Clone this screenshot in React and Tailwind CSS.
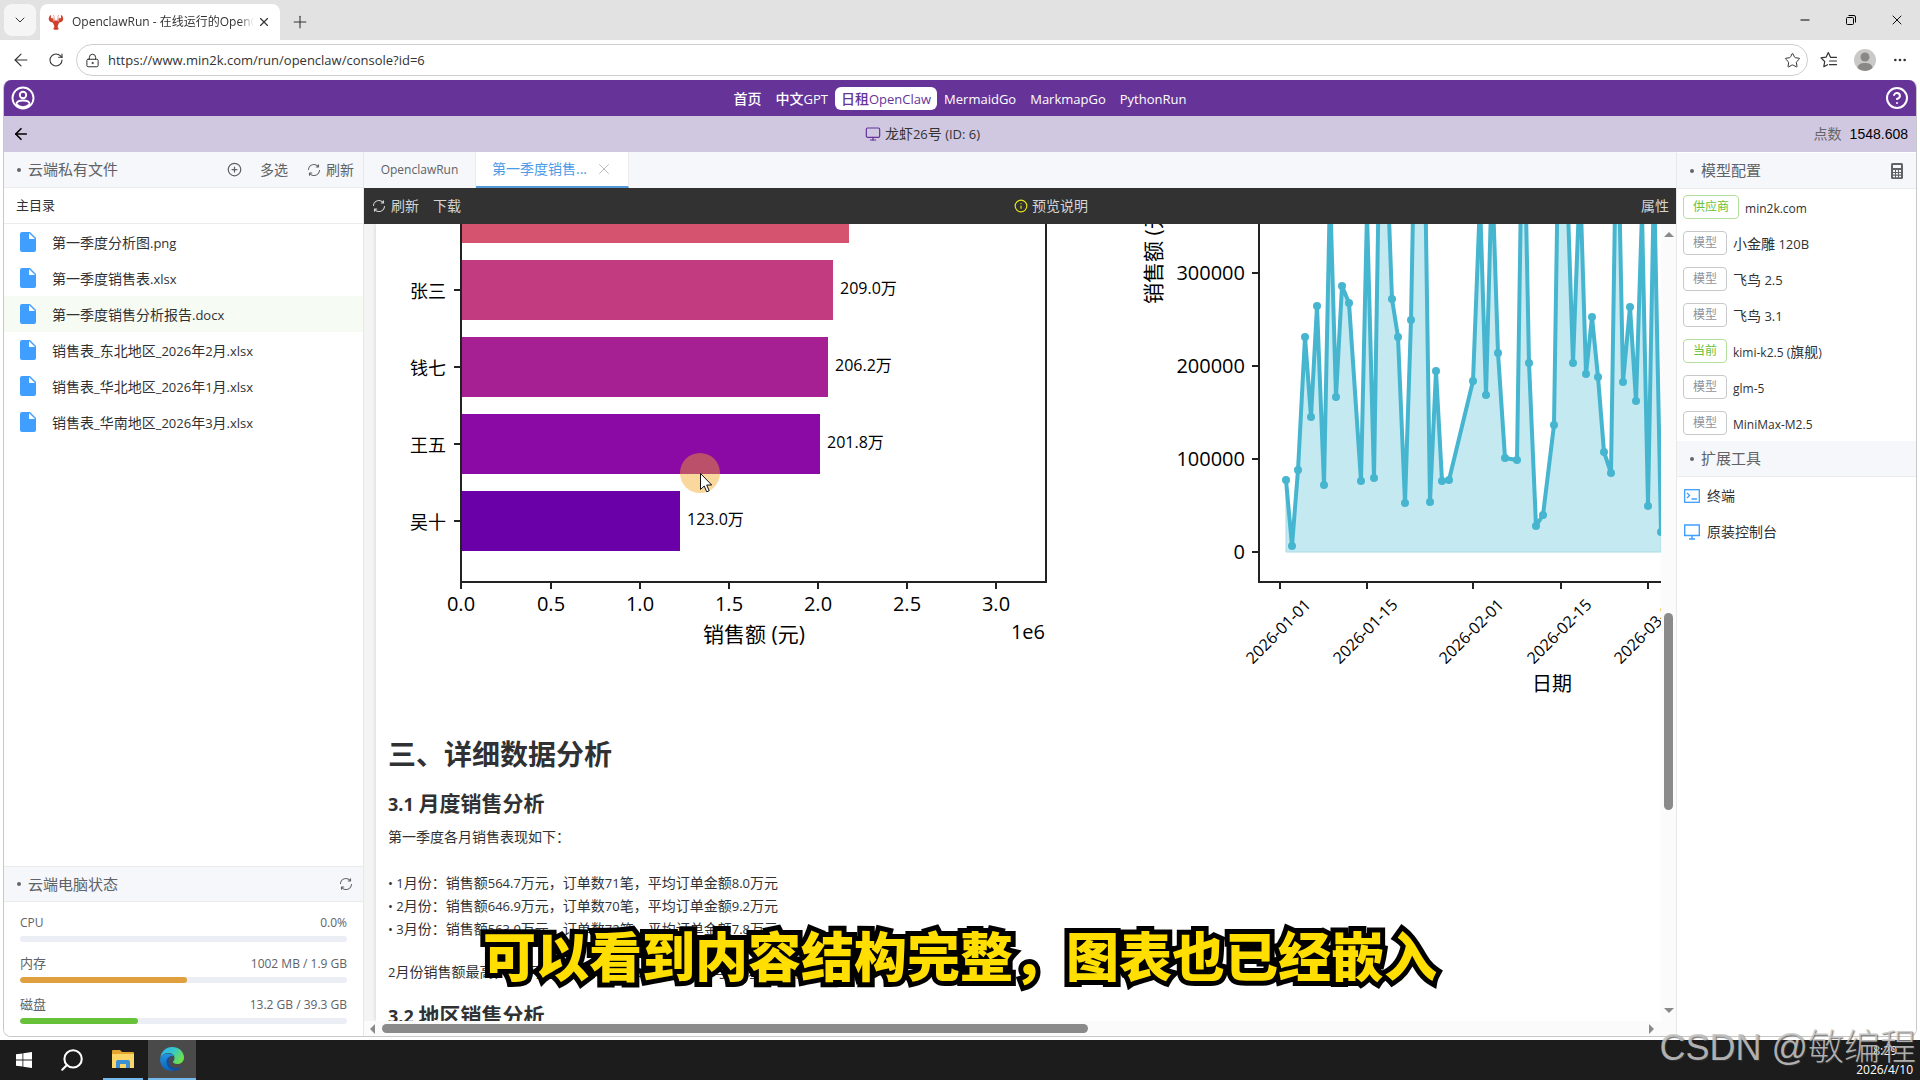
import React from "react";
import {
  ArrowLeft, ChevronDown, X, Plus, Minus, RotateCw, Star, Ellipsis,
  CirclePlus, CircleAlert, CircleHelp, Monitor, LockKeyhole, Search,
} from "lucide-react";

/* Mixed-script text: Latin runs are set slightly smaller than the CJK around them. */
function Mixed({ children, latin = "text-[13px] leading-none" }) {
  return children.split(/([\x20-\x7e•]+)/).map((part, i) =>
    i % 2 ? <span key={i} className={latin}>{part}</span> : part
  );
}

function RefreshIcon({ className }) {
  return (
    <svg viewBox="0 0 1024 1024" className={className} fill="currentColor" aria-hidden="true">
      <path transform="matrix(-1 0 0 1 1024 0)" d="M771.776 794.88A384 384 0 0 1 128 512h64a320 320 0 0 0 555.712 216.448H654.72a32 32 0 1 1 0-64h149.056a32 32 0 0 1 32 32v148.928a32 32 0 1 1-64 0v-50.56zM276.288 295.616h92.992a32 32 0 0 1 0 64H220.16a32 32 0 0 1-32-32V178.56a32 32 0 0 1 64 0v50.56A384 384 0 0 1 896.128 512h-64a320 320 0 0 0-555.776-216.384z" />
    </svg>
  );
}

function LobsterIcon() {
  return (
    <svg viewBox="0 0 16 16" className="size-4 shrink-0" fill="#d0402b" aria-hidden="true">
      <path d="M3.2.8C1.200 2 .2 4.400 1 6.200c.6 1.300 2 2 3.200 2.100L6 10l1.200-1.300-1.800-1.700c.5-1.400.1-2.900-.9-3.500L4.200 5 2.900 3.400zM12.800.8c2 1.200 3 3.600 2.200 5.400-.6 1.300-2 2-3.200 2.100L10 10 8.800 8.700l1.800-1.700c-.5-1.400-.1-2.900.9-3.500L11.800 5l1.300-1.600z" />
      <path d="M6 6.500h4l.6 3-1 3.200 1.200 2.300-1.400.8H6.600L5.200 15l1.200-2.300-1-3.200z" />
      <path d="M6.800 6.500 5.500.8M9.200 6.500 10.500.8" stroke="#e0705c" strokeWidth=".6" />
    </svg>
  );
}

function FileIcon() {
  return (
    <svg viewBox="0 0 16 20" className="h-5 w-4 shrink-0" aria-hidden="true">
      <path d="M2 0h8l6 6v12a2 2 0 0 1-2 2H2a2 2 0 0 1-2-2V2a2 2 0 0 1 2-2z" fill="#409eff" />
      <path d="M9 1l6 6H9z" fill="#fff" />
    </svg>
  );
}

function BrowserChrome() {
  return (
    <header className="shrink-0 bg-white text-[#333]">
      <div className="flex h-10 items-end bg-[#e2e2e2] pl-1">
        <button aria-label="标签页列表" className="mb-1 flex size-8 items-center justify-center rounded-lg bg-[#f5f5f5]">
          <ChevronDown className="size-4" strokeWidth={1.5} />
        </button>
        <div className="ml-1 flex h-9 w-60 items-center rounded-t-lg bg-white pr-2 pl-2 text-xs">
          <LobsterIcon />
          <span className="ml-2 w-[182px] overflow-hidden whitespace-nowrap [mask-image:linear-gradient(to_right,black_92%,transparent)]">
            OpenclawRun - 在线运行的OpenClaw
          </span>
          <button aria-label="关闭标签页" className="ml-0.5 flex size-4 items-center justify-center">
            <X className="size-[14px]" strokeWidth={2} />
          </button>
        </div>
        <button aria-label="新建标签页" className="mb-2 ml-2.5 flex size-5 items-center justify-center">
          <Plus className="size-5" strokeWidth={1.3} />
        </button>
        <div className="mb-2 ml-auto flex gap-[22px] pr-[11px] text-black">
          <button aria-label="最小化" className="flex size-6 items-center justify-center"><Minus className="size-3.5" strokeWidth={1.7} /></button>
          <button aria-label="还原" className="flex size-6 items-center justify-center">
            <svg viewBox="0 0 10 10" className="size-2.5" fill="none" stroke="currentColor">
              <rect x=".5" y="2.500" width="7" height="7" rx="1" />
              <path d="M2.500.5H8a1.500 1.500 0 0 1 1.500 1.500v5.500" />
            </svg>
          </button>
          <button aria-label="关闭" className="flex size-6 items-center justify-center"><X className="size-4" strokeWidth={1.4} /></button>
        </div>
      </div>
      <div className="flex h-10 items-center pl-[11px]">
        <button aria-label="后退"><ArrowLeft className="size-5" strokeWidth={1.4} /></button>
        <button aria-label="刷新页面" className="ml-[17px]"><RotateCw className="size-4" strokeWidth={1.6} /></button>
        <div className="ml-3 flex h-8 flex-1 items-center rounded-full border border-[#cfcfcf] bg-white pr-1.5 pl-2">
          <LockKeyhole className="size-[15px]" strokeWidth={1.6} />
          <input aria-label="地址" defaultValue="https://www.min2k.com/run/openclaw/console?id=6" className="ml-2 flex-1 bg-transparent pt-0.5 text-[13px] outline-none" />
          <button aria-label="收藏"><Star className="size-[17px]" strokeWidth={1.4} /></button>
        </div>
        <button aria-label="收藏夹" className="ml-3">
          <svg viewBox="0 0 18 18" className="size-[18px]" fill="none" stroke="currentColor" strokeWidth="1.2" strokeLinejoin="round" strokeLinecap="round">
            <path d="M10.500 6.200 8.300 1.500 6.100 6.200 1 6.900l3.700 3.600-.9 5.200L7.500 13.700M10.500 6.300H16.500M9.500 10h7M9.500 13.700h7" />
          </svg>
        </button>
        <button aria-label="个人资料" className="ml-4">
          <svg viewBox="0 0 22 22" className="size-[22px]">
            <circle cx="11" cy="11" r="11" fill="#cbc9c7" />
            <circle cx="11" cy="8" r="4.500" fill="#8a8886" />
            <path d="M3.500 19c.5-4 3.500-5 7.500-5s7 1 7.500 5A11 11 0 0 1 3.500 19z" fill="#8a8886" />
          </svg>
        </button>
        <button aria-label="设置及其他" className="mr-3 ml-4"><Ellipsis className="size-4" strokeWidth={2} /></button>
      </div>
    </header>
  );
}

const NAV = ["首页", "中文GPT", "日租OpenClaw", "MermaidGo", "MarkmapGo", "PythonRun"];

function AppHeader() {
  return (
    <>
      <div className="flex h-9 shrink-0 items-center bg-[#663399] px-[7px] text-white">
        <button aria-label="账户">
          <svg viewBox="0 0 24 24" className="size-6" fill="none" stroke="currentColor" strokeWidth="1.900">
            <circle cx="12" cy="12" r="10.500" />
            <circle cx="12" cy="9" r="3.200" />
            <path d="M5.500 18.500c-.5-3 2.500-4 6.500-4s7 1 6.500 4c-2 2-4 2.700-6.500 2.700s-4.500-.7-6.500-2.700z" />
          </svg>
        </button>
        <nav className="flex flex-1 items-center justify-center">
          {NAV.map((n) => (
            <a key={n} href="#" className={n === "日租OpenClaw"
              ? "rounded-md bg-white px-1.5 text-sm leading-[23px] font-medium text-[#663399]"
              : "px-[7px] text-sm leading-[23px] font-medium"}>
              <Mixed>{n}</Mixed>
            </a>
          ))}
        </nav>
        <button aria-label="帮助"><CircleHelp className="size-6" strokeWidth={2} /></button>
      </div>
      <div className="grid h-9 shrink-0 grid-cols-[1fr_auto_1fr] items-center bg-[#d0c7e1] px-2">
        <button aria-label="返回" className="justify-self-start text-black"><ArrowLeft className="size-[18px]" strokeWidth={2.2} /></button>
        <div className="flex items-center gap-1 pr-[75px] text-sm text-[#333]">
          <Monitor className="size-4 text-[#663399]" strokeWidth={1.8} />
          <span><Mixed>龙虾26号 (ID: 6)</Mixed></span>
        </div>
        <div className="flex items-center gap-2 justify-self-end text-sm text-[#666]">
          点数 <span className="font-['Liberation_Sans',sans-serif] text-black">1548.608</span>
        </div>
      </div>
    </>
  );
}

function PanelHeader({ title, children, className }) {
  return (
    <div className={`flex h-9 shrink-0 items-center border-[#ebebeb] bg-[#f5f7fa] pl-[13px] text-[#606266] ${className}`}>
      <span className="mr-[7px] size-1 rounded-full bg-[#666]" />
      <h2 className="flex-1 text-[15px]">{title}</h2>
      {children}
    </div>
  );
}

const FILES = [
  "第一季度分析图.png",
  "第一季度销售表.xlsx",
  "第一季度销售分析报告.docx",
  "销售表_东北地区_2026年2月.xlsx",
  "销售表_华北地区_2026年1月.xlsx",
  "销售表_华南地区_2026年3月.xlsx",
];

const METERS = [
  { label: "CPU", value: "0.0%", pct: 0, color: "bg-[#67c23a]" },
  { label: "内存", value: "1002 MB / 1.9 GB", pct: 51, color: "bg-[#e0a040]" },
  { label: "磁盘", value: "13.2 GB / 39.3 GB", pct: 36, color: "bg-[#67c23a]" },
];

function FilePanel() {
  return (
    <aside className="flex w-[360px] shrink-0 flex-col border-r border-[#e8e8e8] bg-white">
      <PanelHeader title="云端私有文件" className="border-b">
        <div className="flex items-center pr-[9px] text-sm">
          <button aria-label="新建"><CirclePlus className="size-[15px]" strokeWidth={2} /></button>
          <button className="ml-[18px]">多选</button>
          <button className="ml-[18px] flex items-center gap-1"><RefreshIcon className="size-4" />刷新</button>
        </div>
      </PanelHeader>
      <div className="flex h-9 shrink-0 items-center border-b border-[#ebebeb] pl-3 text-[13px] text-[#303133]">主目录</div>
      <ul className="min-h-0 flex-1 overflow-hidden">
        {FILES.map((f, i) => (
          <li key={f} className={i === 2 ? "bg-[#f6fbf3]" : ""}>
            <a href="#" className="flex h-9 items-center gap-4 pl-4 text-sm text-[#303133]">
              <FileIcon />
              <span className="pt-0.5"><Mixed>{f}</Mixed></span>
            </a>
          </li>
        ))}
      </ul>
      <PanelHeader title="云端电脑状态" className="border-y">
        <button aria-label="刷新状态" className="mr-[9px]"><RefreshIcon className="size-4" /></button>
      </PanelHeader>
      <div className="flex flex-col gap-[11px] px-4 pt-[10px] pb-3 text-[#606266]">
        {METERS.map((m) => (
          <div key={m.label}>
            <div className="flex h-6 items-center justify-between pb-0.5">
              <span className={m.label === "CPU" ? "text-xs" : "text-[13px]"}>{m.label}</span>
              <span className="text-xs">{m.value}</span>
            </div>
            <div role="progressbar" aria-label={m.label} aria-valuenow={m.pct} className="h-1.5 overflow-hidden rounded-full bg-[#ebeef5]">
              <div className={`h-full rounded-full ${m.color}`} style={{ width: `${m.pct}%` }} />
            </div>
          </div>
        ))}
      </div>
    </aside>
  );
}

/* Bars of the sales-by-person chart. */
const BARS = [
  { y: 183, w: 388, fill: "#d5536f" },
  { y: 260, w: 372, fill: "#c23b80", name: "张三", value: "209.0万" },
  { y: 337, w: 367, fill: "#a72093", name: "钱七", value: "206.2万" },
  { y: 414, w: 359, fill: "#8b0aa5", name: "王五", value: "201.8万" },
  { y: 491, w: 219, fill: "#6a00a7", name: "吴十", value: "123.0万" },
];

/* Daily sales points of the trend chart. */
const POINTS = [
  [1286, 480], [1292, 546], [1298, 470], [1305, 337], [1311, 417], [1317, 306], [1324, 485], [1330, 190],
  [1336, 397], [1342, 286], [1349, 303], [1361, 481], [1367, 212], [1374, 478], [1380, 108], [1386, 137],
  [1392, 299], [1398, 337], [1405, 503], [1411, 320], [1417, 0], [1424, 98], [1430, 502], [1436, 371],
  [1442, 481], [1449, 480], [1473, 381], [1480, 200], [1486, 395], [1492, 170], [1498, 353], [1505, 458],
  [1517, 460], [1523, 60], [1529, 363], [1536, 526], [1543, 515], [1554, 425], [1561, -35], [1567, 180],
  [1573, 363], [1580, 178], [1586, 374], [1592, 317], [1598, 377], [1604, 452], [1611, 473], [1617, 75],
  [1623, 382], [1630, 307], [1636, 401], [1642, 212], [1648, 506], [1654, 178], [1661, 532],
];
const LINE = POINTS.map((p) => p.join(",")).join(" ");

function Charts() {
  return (
    <svg width="1400" height="487" viewBox="376 224 1400 487" className="block max-w-none bg-white font-['Open_Sans','Noto_Sans_CJK_SC',sans-serif]" fill="#000">
      {BARS.map((b) => <rect key={b.y} x="461" y={b.y} width={b.w} height="60" fill={b.fill} />)}
      {BARS.filter((b) => b.name).map((b) => (
        <g key={b.name}>
          <path d={`M454 ${b.y + 30}h7`} stroke="#222" strokeWidth="2" />
          <text x="446" y={b.y + 38} textAnchor="end" fontSize="18">{b.name}</text>
          <text x={467 + b.w + 1} y={b.y + 34} fontSize="16">{b.value}</text>
        </g>
      ))}
      <path d="M461 200V582H1046V200" fill="none" stroke="#222" strokeWidth="2" />
      {[[461, "0.0"], [551, "0.5"], [640, "1.0"], [729, "1.5"], [818, "2.0"], [907, "2.5"], [996, "3.0"]].map(([x, t]) => (
        <g key={t}>
          <path d={`M${x} 582v7`} stroke="#222" strokeWidth="2" />
          <text x={x} y="611" textAnchor="middle" fontSize="20">{t}</text>
        </g>
      ))}
      <text x="754" y="642" textAnchor="middle" fontSize="21">销售额 (元)</text>
      <text x="1045" y="639" textAnchor="end" fontSize="20">1e6</text>

      <polygon points={`1286,552 ${LINE} 1661,552`} fill="#c5e9f0" stroke="#a9dbe6" />
      <polyline points={LINE} fill="none" stroke="#46b5cf" strokeWidth="4" strokeLinejoin="round" />
      {POINTS.map(([x, y]) => <circle key={x} cx={x} cy={y} r="4" fill="#46b5cf" />)}
      <path d="M1259 200V582H1760" fill="none" stroke="#222" strokeWidth="2" />
      {["0", "100000", "200000", "300000"].map((t, i) => (
        <g key={t}>
          <path d={`M1252 ${552 - i * 93}h7`} stroke="#222" strokeWidth="2" />
          <text x="1245" y={559 - i * 93} textAnchor="end" fontSize="20">{t}</text>
        </g>
      ))}
      {[[1280, "2026-01-01"], [1367, "2026-01-15"], [1473, "2026-02-01"], [1561, "2026-02-15"], [1648, "2026-03-01"]].map(([x, t]) => (
        <g key={t}>
          <path d={`M${x} 582v7`} stroke="#222" strokeWidth="2" />
          <text transform={`translate(${x - 2} 631) rotate(-45)`} y="6" textAnchor="middle" fontSize="16">{t}</text>
        </g>
      ))}
      <text transform="translate(1161 304) rotate(-90)" fontSize="21">销售额 (元)</text>
      <text x="1552" y="691" textAnchor="middle" fontSize="20">日期</text>
    </svg>
  );
}

function Report() {
  return (
    <article className="mx-3 flex-1 bg-white text-[#303133] shadow-[0_0_4px_rgba(0,0,0,0.15)]">
      <Charts />
      <div className="px-3 text-sm whitespace-nowrap">
        <h1 className="mt-[25px] text-[28px] leading-9 font-bold">三、详细数据分析</h1>
        <h2 className="mt-[17px] text-[21px] leading-7 font-bold"><Mixed latin="text-lg leading-none">3.1 月度销售分析</Mixed></h2>
        <p className="mt-[9px] leading-[22px]">第一季度各月销售表现如下：</p>
        <ul className="mt-[23px] leading-[23px]">
          <li><Mixed>• 1月份：销售额564.7万元，订单数71笔，平均订单金额8.0万元</Mixed></li>
          <li><Mixed>• 2月份：销售额646.9万元，订单数70笔，平均订单金额9.2万元</Mixed></li>
          <li><Mixed>• 3月份：销售额563.0万元，订单数72笔，平均订单金额7.8万元</Mixed></li>
        </ul>
        <p className="mt-[21px] leading-[22px]"><Mixed>2月份销售额最高，较1月份增长14.6%，3月份销售额与1月基本持平。</Mixed></p>
        <h2 className="mt-[18px] text-[21px] leading-7 font-bold"><Mixed latin="text-lg leading-none">3.2 地区销售分析</Mixed></h2>
      </div>
    </article>
  );
}

function Viewer() {
  return (
    <main className="flex min-w-0 flex-1 flex-col">
      <div role="tablist" className="flex h-9 shrink-0 bg-[#f5f7fa] text-sm">
        <button role="tab" className="w-28 border-r border-[#ebebeb] text-xs text-[#606266]">OpenclawRun</button>
        <div role="tab" aria-selected="true" className="flex w-[153px] items-center border-r border-b-2 border-r-[#ebebeb] border-b-[#5599d8] bg-white pl-4 text-[#4a9be8]">
          第一季度销售...
          <button aria-label="关闭" className="ml-2 text-[#bbb]"><X className="size-[18px]" strokeWidth={1.3} /></button>
        </div>
      </div>
      <div className="grid h-9 shrink-0 grid-cols-3 items-center bg-[#323232] px-[7px] text-sm text-[#d5d5d5]">
        <div className="flex items-center gap-3.5">
          <button className="flex items-center gap-1"><RefreshIcon className="size-4" />刷新</button>
          <button>下载</button>
        </div>
        <button className="flex items-center justify-center gap-1 pl-[62px]"><CircleAlert className="size-[14px] rotate-180 text-[#e6e619]" strokeWidth={2} />预览说明</button>
        <button className="justify-self-end">属性</button>
      </div>
      <div className="grid min-h-0 flex-1 grid-cols-[minmax(0,1fr)_15px] grid-rows-[minmax(0,1fr)_15px] bg-[#fbfbfb]">
        <div className="flex overflow-hidden bg-[#f4f4f4]"><Report /></div>
        <div className="flex min-h-0 flex-col items-center py-2">
          <span className="border-x-[5px] border-b-[5px] border-x-transparent border-b-[#8a8a8a]" />
          <span className="h-[376px]" />
          <span className="h-[197px] w-[9px] rounded-full bg-[#8a8a8a]" />
          <span className="mt-auto border-x-[5px] border-t-[5px] border-x-transparent border-t-[#8a8a8a]" />
        </div>
        <div className="flex items-center pr-[7px] pl-1.5">
          <span className="border-y-[5px] border-r-[5px] border-y-transparent border-r-[#8a8a8a]" />
          <span className="ml-[7px] h-[9px] w-[55%] rounded-full bg-[#8a8a8a]" />
          <span className="ml-auto border-y-[5px] border-l-[5px] border-y-transparent border-l-[#8a8a8a]" />
        </div>
      </div>
    </main>
  );
}

const MODELS = [
  ["供应商", "min2k.com"],
  ["模型", "小金雕 120B"],
  ["模型", "飞鸟 2.5"],
  ["模型", "飞鸟 3.1"],
  ["当前", "kimi-k2.5 (旗舰)"],
  ["模型", "glm-5"],
  ["模型", "MiniMax-M2.5"],
];

function ConfigPanel() {
  return (
    <aside className="flex w-60 shrink-0 flex-col border-l border-[#e8e8e8] bg-white pt-px">
      <PanelHeader title="模型配置" className="border-b">
        <button aria-label="计算器" className="mr-[13px]">
          <svg viewBox="0 0 12 16" className="h-4 w-3">
            <rect width="12" height="16" rx="1.500" fill="#606266" />
            <path d="M2 2h8v3H2zM2 7h2v2H2zM5 7h2v2H5zM8 7h2v2H8zM2 10h2v1.500H2zM5 10h2v1.500H5zM8 10h2v1.500H8zM2 12.700h2v1.500H2zM5 12.700h2v1.500H5zM8 12.700h2v1.500H8z" fill="#f5f7fa" />
          </svg>
        </button>
      </PanelHeader>
      <ul>
        {MODELS.map(([tag, name]) => (
          <li key={name} className="flex h-9 items-center gap-1.5 pl-1.5 text-sm text-[#303133]">
            <span className={tag === "模型"
              ? "rounded border border-[#c8c9cc] px-[9px] text-xs leading-[22px] text-[#909399]"
              : "rounded border border-[#b3e19d] px-[9px] text-xs leading-[22px] text-[#67c23a]"}>{tag}</span>
            <span className="pt-0.5"><Mixed latin={/[a-z]/.test(name) ? "text-xs leading-none" : "text-[13px] leading-none"}>{name}</Mixed></span>
          </li>
        ))}
      </ul>
      <PanelHeader title="扩展工具" className="border-b" />
      <a href="#" className="flex h-9 items-center gap-[7px] pt-0.5 pl-[7px] text-sm text-[#303133]">
        <svg viewBox="0 0 16 14" className="h-[14px] w-4" fill="none" stroke="#409eff" strokeWidth="1.3">
          <rect x=".7" y=".7" width="14.600" height="12.600" />
          <path d="M3 4l2.500 2.500L3 9M7.500 10h5.500" />
        </svg>
        终端
      </a>
      <a href="#" className="flex h-9 items-center gap-[7px] pt-0.5 pl-[7px] text-sm text-[#303133]">
        <svg viewBox="0 0 16 16" className="size-4" fill="none" stroke="#409eff" strokeWidth="1.4">
          <path d="M.7 1h14.600v10.500H.7zM8 11.500V15M5 15h6" />
        </svg>
        原装控制台
      </a>
    </aside>
  );
}

function Taskbar() {
  return (
    <footer className="flex h-10 shrink-0 items-stretch bg-[#1c1c1c] text-white">
      <button aria-label="开始" className="flex w-12 items-center justify-center">
        <svg viewBox="0 0 16 16" className="size-4" fill="#fff">
          <path d="M0 2.300 6.500 1.400v6.200H0zM7.300 1.300 16 0v7.600H7.300zM0 8.400h6.500v6.200L0 13.700zM7.300 8.400H16V16l-8.700-1.300z" />
        </svg>
      </button>
      <button aria-label="搜索" className="flex w-12 items-center justify-center"><Search className="size-[26px] -scale-x-100" strokeWidth={1.9} /></button>
      <button aria-label="文件资源管理器" className="mx-[7px] flex w-10 items-center justify-center border-b-2 border-[#76b9ed]">
        <svg viewBox="0 0 22 18" className="h-[18px] w-[22px]">
          <path d="M0 1a1 1 0 0 1 1-1h7l2 2h11a1 1 0 0 1 1 1v14H0z" fill="#e3a52e" />
          <path d="M0 4h22v14H0z" fill="#fbd568" />
          <path d="M4 18v-6a2 2 0 0 1 2-2h10a2 2 0 0 1 2 2v6h-4v-4H8v4z" fill="#3d90d3" />
        </svg>
      </button>
      <button aria-label="浏览器" className="-ml-0.5 flex w-12 items-center justify-center border-b-2 border-[#76b9ed] bg-[#4a4a4a]">
        <svg viewBox="0 0 24 24" className="size-6">
          <defs>
            <linearGradient id="edge-top" x1="0" y1="0" x2="1" y2=".5">
              <stop offset="0" stopColor="#2fb2e8" />
              <stop offset=".5" stopColor="#34c5cf" />
              <stop offset="1" stopColor="#6be04f" />
            </linearGradient>
            <linearGradient id="edge-low" x1="0" y1="0" x2="0" y2="1">
              <stop offset="0" stopColor="#2395e0" />
              <stop offset="1" stopColor="#0d63b8" />
            </linearGradient>
          </defs>
          <path d="M.3 11C1 4.500 6 0 12 0c7 0 12 4.800 12 10.500 0 4-3 6.500-6.500 6.500-3 0-4.500-1.200-4.500-2s1.500-1.300 1.500-4c0-3-2.800-5-6.500-5-4 0-6.500 2.500-7.700 5z" fill="url(#edge-top)" />
          <path d="M.1 12.500C.5 8.500 4 6.500 8 6.500c2.500 0 4.500 1 5.500 2.500C10 8.500 7.500 11 7.500 14.500c0 4 3 7.800 6.500 9C6 25 0 19.500.1 12.500z" fill="url(#edge-low)" />
          <path d="M13.500 9C10.500 9 8.500 11.500 8.500 14.500c0 4 3.500 6.500 7.500 6.500 2.500 0 4.500-.8 6-1.800-1.800 2.800-4.800 4.500-8 4.500-4-.8-7.500-4.700-7.500-9C6.500 11 9.500 8.300 13.500 9z" fill="#1150a0" />
        </svg>
      </button>
      <div className="ml-auto flex flex-col items-end justify-center pr-[7px] text-right text-xs leading-[19px]">
        <time className="pr-4">8:29</time>
        <time>2026/4/10</time>
      </div>
    </footer>
  );
}

export default function App() {
  return (
    <div className="relative flex h-screen flex-col overflow-hidden bg-white font-['Open_Sans','Noto_Sans_CJK_SC',sans-serif]">
      <BrowserChrome />
      <div className="mx-[3px] mb-[3px] flex min-h-0 flex-1 flex-col overflow-hidden rounded-lg border border-t-0 border-[#c8c8c8]">
        <AppHeader />
        <div className="flex min-h-0 flex-1">
          <FilePanel />
          <Viewer />
          <ConfigPanel />
        </div>
      </div>
      <Taskbar />

      <svg viewBox="0 0 40 40" className="absolute top-[453px] left-[680px] size-10" aria-hidden="true">
        <circle cx="20" cy="20" r="20" fill="#f5a623" fillOpacity=".45" />
        <path d="M20.500 20.500v16l3.700-3.500 2.500 5.800 2.500-1-2.500-5.800h5z" fill="#fff" stroke="#111" />
      </svg>
      <p className="absolute inset-x-0 bottom-[88px] text-center font-['Noto_Sans_CJK_SC',sans-serif] text-[53px] leading-[76px] font-black whitespace-nowrap text-[#ffde00] [-webkit-text-stroke:10px_black] [paint-order:stroke_fill]">
        可以看到内容结构完整，图表也已经嵌入
      </p>
      <p className="absolute right-1 bottom-2 font-['Liberation_Sans','Noto_Sans_CJK_SC',sans-serif] text-4xl leading-[48px] font-light whitespace-nowrap text-[#c8c8c8]/85 [text-shadow:1px_1px_1px_rgba(60,60,60,0.7)]">
        CSDN @敏编程
      </p>
    </div>
  );
}
